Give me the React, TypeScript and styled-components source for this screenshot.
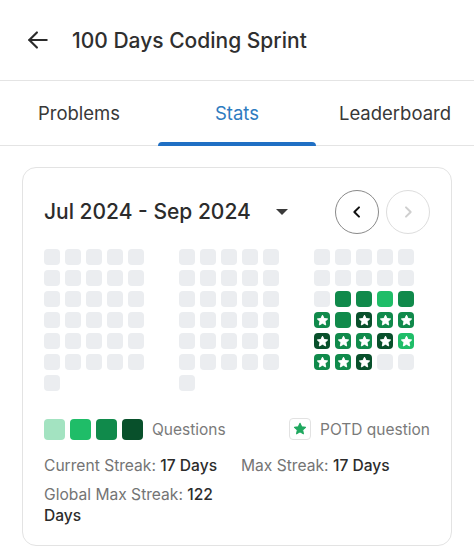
import React from 'react';
import styled, { createGlobalStyle } from 'styled-components';

const GlobalStyle = createGlobalStyle`
  * {
    box-sizing: border-box;
  }
  body {
    margin: 0;
    background: #ffffff;
    font-family: 'Inter', 'Roboto', sans-serif;
    color: #333333;
  }
`;

const Page = styled.div`
  width: 474px;
  min-height: 549px;
  background: #ffffff;
`;

const Header = styled.div`
  display: flex;
  align-items: center;
  gap: 20px;
  height: 81px;
  padding: 0 0 0 24px;
  border-bottom: 1px solid #e4e4e4;
`;

const BackButton = styled.button`
  display: flex;
  align-items: center;
  justify-content: center;
  width: 28px;
  height: 28px;
  padding: 0;
  border: none;
  background: transparent;
  color: #2b2b2b;
  cursor: pointer;
`;

const Title = styled.h1`
  margin: 0;
  font-size: 21px;
  font-weight: 500;
  color: #2f2f2f;
`;

const Tabs = styled.div`
  display: grid;
  grid-template-columns: repeat(3, 1fr);
  height: 65px;
  border-bottom: 1px solid #e4e4e4;
`;

const Tab = styled.div<{ $active?: boolean }>`
  position: relative;
  display: flex;
  align-items: center;
  justify-content: center;
  font-size: 18.5px;
  color: ${(p) => (p.$active ? '#2d7bc0' : '#383838')};

  &::after {
    content: '';
    display: ${(p) => (p.$active ? 'block' : 'none')};
    position: absolute;
    left: 0;
    right: 0;
    bottom: -1px;
    height: 4px;
    border-radius: 4px 4px 0 0;
    background: #1f6fc4;
  }
`;

const Card = styled.div`
  margin: 21px 22px 0;
  padding: 21px 21px 19px;
  border: 1px solid #e3e3e3;
  border-radius: 14px;
`;

const CardTop = styled.div`
  display: flex;
  align-items: center;
  justify-content: space-between;
  height: 45px;
`;

const RangePicker = styled.div`
  display: flex;
  align-items: center;
  gap: 25px;
`;

const RangeLabel = styled.span`
  font-size: 21px;
  font-weight: 500;
  color: #2c2c2c;
`;

const Caret = styled.span`
  width: 0;
  height: 0;
  border-left: 6px solid transparent;
  border-right: 6px solid transparent;
  border-top: 6px solid #3a3a3a;
`;

const NavGroup = styled.div`
  display: flex;
  gap: 7px;
`;

const NavButton = styled.button<{ $disabled?: boolean }>`
  display: flex;
  align-items: center;
  justify-content: center;
  width: 44px;
  height: 44px;
  padding: 0;
  border-radius: 50%;
  border: 1px solid ${(p) => (p.$disabled ? '#dddddd' : '#8a8a8a')};
  background: #ffffff;
  color: ${(p) => (p.$disabled ? '#cfcfcf' : '#111111')};
  cursor: ${(p) => (p.$disabled ? 'default' : 'pointer')};
`;

const Months = styled.div`
  display: flex;
  gap: 35px;
  margin-top: 15px;
  height: 142px;
`;

const MonthGrid = styled.div`
  display: grid;
  grid-template-columns: repeat(5, 16px);
  grid-auto-rows: 16px;
  gap: 5px;
  align-content: start;
`;

const levelColors = ['#ebedf0', '#a3e3c1', '#1fbd68', '#108a4b', '#08502b'];

const Cell = styled.div<{ $level: number }>`
  display: flex;
  align-items: center;
  justify-content: center;
  width: 16px;
  height: 16px;
  border-radius: 4px;
  background: ${(p) => levelColors[p.$level]};
`;

const Legend = styled.div`
  display: flex;
  align-items: center;
  justify-content: space-between;
  margin-top: 27px;
`;

const LegendGroup = styled.div`
  display: flex;
  align-items: center;
  gap: 5px;
`;

const Swatch = styled.div<{ $level: number }>`
  width: 21px;
  height: 21px;
  border-radius: 4px;
  background: ${(p) => levelColors[p.$level]};
`;

const LegendText = styled.span`
  margin-left: 4px;
  font-size: 15.5px;
  color: #7a7a7a;
`;

const PotdBox = styled.div`
  display: flex;
  align-items: center;
  justify-content: center;
  width: 22px;
  height: 22px;
  border: 1px solid #e2e2e2;
  border-radius: 4px;
`;

const Stats = styled.div`
  display: grid;
  grid-template-columns: 1fr 1fr;
  column-gap: 8px;
  row-gap: 8px;
  margin-top: 15px;
  font-size: 15.6px;
  line-height: 21px;
`;

const Stat = styled.div`
  color: #747474;
`;

const StatValue = styled.span`
  color: #2c2c2c;
  font-weight: 500;
`;

function Star({ size, color }: { size: number; color: string }) {
  return (
    <svg width={size} height={size} viewBox="0 0 24 24">
      <path
        d="M12 2.2l2.9 6.1 6.6.8-4.9 4.6 1.3 6.6L12 17l-5.9 3.3 1.3-6.6-4.9-4.6 6.6-.8z"
        fill={color}
        stroke={color}
        strokeWidth="1.8"
        strokeLinejoin="round"
      />
    </svg>
  );
}

type Day = { level: number; potd?: boolean };

const empty = (n: number): Day[] => Array.from({ length: n }, () => ({ level: 0 }));

const september: Day[] = [
  ...empty(11),
  { level: 3 },
  { level: 3 },
  { level: 2 },
  { level: 3 },
  { level: 3, potd: true },
  { level: 3 },
  { level: 4, potd: true },
  { level: 3, potd: true },
  { level: 3, potd: true },
  { level: 4, potd: true },
  { level: 3, potd: true },
  { level: 3, potd: true },
  { level: 4, potd: true },
  { level: 2, potd: true },
  { level: 3, potd: true },
  { level: 3, potd: true },
  { level: 4, potd: true },
  { level: 0 },
  { level: 0 },
];

const months: Day[][] = [empty(31), empty(31), september];

export default function App() {
  return (
    <Page>
      <GlobalStyle />
      <Header>
        <BackButton aria-label="Back">
          <svg width="26" height="26" viewBox="0 0 24 24" fill="none" stroke="currentColor" strokeWidth="2" strokeLinecap="round" strokeLinejoin="round">
            <path d="M20 12H4" />
            <path d="M11 5l-7 7 7 7" />
          </svg>
        </BackButton>
        <Title>100 Days Coding Sprint</Title>
      </Header>

      <Tabs>
        <Tab>Problems</Tab>
        <Tab $active>Stats</Tab>
        <Tab>Leaderboard</Tab>
      </Tabs>

      <Card>
        <CardTop>
          <RangePicker>
            <RangeLabel>Jul 2024 - Sep 2024</RangeLabel>
            <Caret />
          </RangePicker>
          <NavGroup>
            <NavButton aria-label="Previous">
              <svg width="16" height="16" viewBox="0 0 24 24" fill="none" stroke="currentColor" strokeWidth="3" strokeLinecap="round" strokeLinejoin="round">
                <path d="M15 5l-7 7 7 7" />
              </svg>
            </NavButton>
            <NavButton $disabled aria-label="Next">
              <svg width="16" height="16" viewBox="0 0 24 24" fill="none" stroke="currentColor" strokeWidth="3" strokeLinecap="round" strokeLinejoin="round">
                <path d="M9 5l7 7-7 7" />
              </svg>
            </NavButton>
          </NavGroup>
        </CardTop>

        <Months>
          {months.map((days, m) => (
            <MonthGrid key={m}>
              {days.map((d, i) => (
                <Cell key={i} $level={d.level}>
                  {d.potd && <Star size={13} color="#ffffff" />}
                </Cell>
              ))}
            </MonthGrid>
          ))}
        </Months>

        <Legend>
          <LegendGroup>
            <Swatch $level={1} />
            <Swatch $level={2} />
            <Swatch $level={3} />
            <Swatch $level={4} />
            <LegendText>Questions</LegendText>
          </LegendGroup>
          <LegendGroup>
            <PotdBox>
              <Star size={14} color="#1fa85f" />
            </PotdBox>
            <LegendText>POTD question</LegendText>
          </LegendGroup>
        </Legend>

        <Stats>
          <Stat>
            Current Streak: <StatValue>17 Days</StatValue>
          </Stat>
          <Stat>
            Max Streak: <StatValue>17 Days</StatValue>
          </Stat>
          <Stat>
            Global Max Streak: <StatValue>122</StatValue> <StatValue>Days</StatValue>
          </Stat>
        </Stats>
      </Card>
    </Page>
  );
}
